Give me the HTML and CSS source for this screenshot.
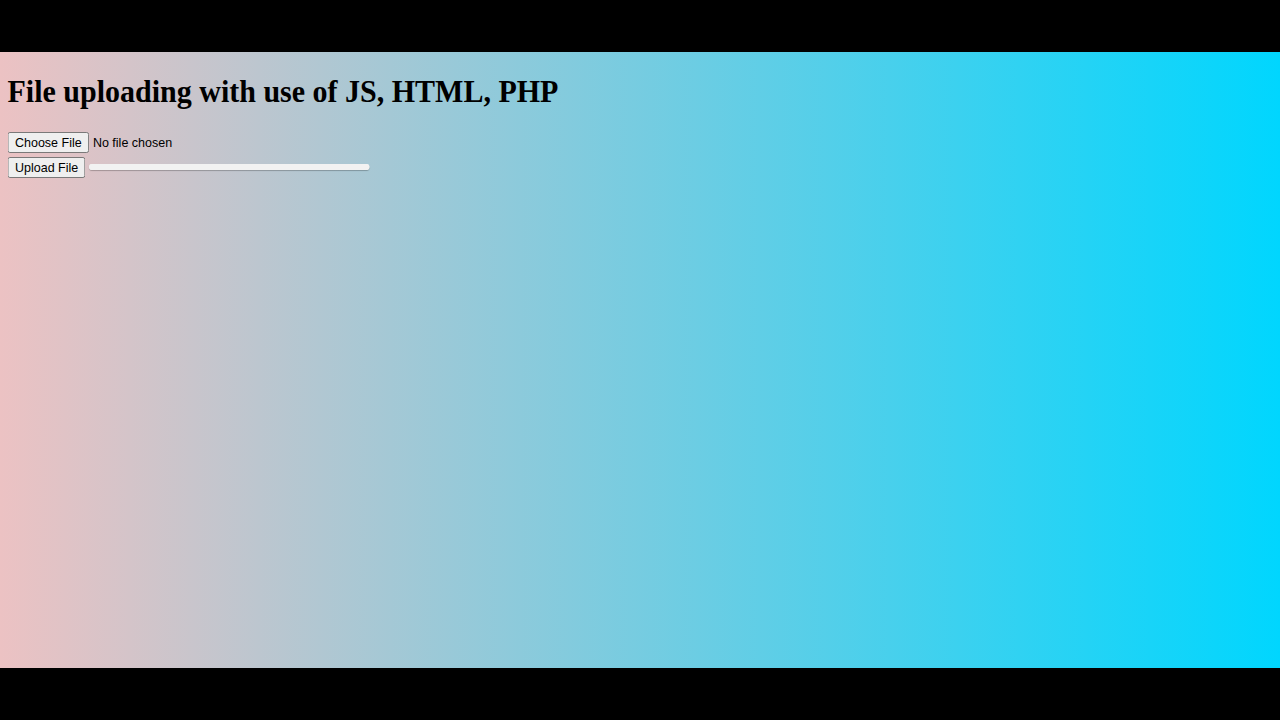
FILE: index.html
```html
<!DOCTYPE html>
<html>
<head>
<meta charset="utf-8">
<title>File upload</title>
<link rel="stylesheet" href="styles.css">
</head>
<body>
<div class="screen">
  <div class="content">
    <h1 class="title">File uploading with use of JS, HTML, PHP</h1>
    <form class="upload-form">
      <input type="file" class="file-input"><br>
      <button type="button" class="upload-btn">Upload File</button>
      <progress class="bar" value="0" max="100"></progress>
    </form>
  </div>
</div>
</body>
</html>
```
FILE: styles.css
```css
html, body {
  margin: 0;
  padding: 0;
  background: #000;
  height: 720px;
  overflow: hidden;
}
.screen {
  margin-top: 52px;
  height: 616px;
  box-sizing: border-box;
  background: linear-gradient(to right, #ecc2c3, #00d6fe);
  overflow: hidden;
  display: flow-root;
}
.content {
  transform: scaleX(0.9375);
  transform-origin: 0 0;
  padding: 0 8px;
  display: flow-root;
  font-family: "Liberation Serif", "Times New Roman", serif;
}
.title {
  font-size: 32px;
  font-weight: bold;
  margin: 21.44px 0;
  color: #000;
}
.upload-form {
  font-family: "Liberation Sans", Arial, sans-serif;
  font-size: 13.33px;
}
.file-input {
  font-family: "Liberation Sans", Arial, sans-serif;
  font-size: 13.33px;
}
.upload-btn {
  font-family: "Liberation Sans", Arial, sans-serif;
  font-size: 13.33px;
  margin-top: 4px;
}
.bar {
  -webkit-appearance: none;
  appearance: none;
  width: 299px;
  height: 6px;
  border: none;
  border-radius: 3px;
  background: #f2f2f2;
  box-shadow: 0 1px 1px rgba(0,0,0,0.25);
  vertical-align: middle;
  margin-left: 0;
  position: relative;
  top: -1px;
}
.bar::-webkit-progress-bar {
  background: #f2f2f2;
  border-radius: 3px;
}
.bar::-webkit-progress-value {
  background: #3b82f6;
  border-radius: 3px;
}
```
